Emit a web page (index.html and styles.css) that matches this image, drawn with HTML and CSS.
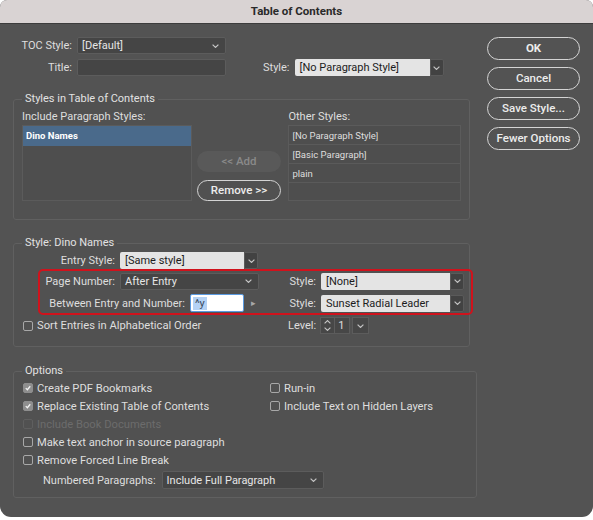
FILE: index.html
```html
<!DOCTYPE html>
<html>
<head>
    <title>Table of Contents</title>
    <link rel="stylesheet" href="styles.css">
</head>
<body>
    <div class="window">
        <div class="titlebar">Table of Contents</div>
        <div class="content">
            <div class="main">
                <div class="top-grid">
                    <span class="lbl right">TOC Style:</span>
                    <div class="dd dark"><span>[Default]</span><svg class="chev" viewBox="0 0 7 4"><path d="M.6.6 3.5 3.4 6.4.6"/></svg></div>
                    <div></div>
                    <span class="lbl right">Title:</span>
                    <div class="field dark"></div>
                    <div class="style-pick">
                        <span class="lbl">Style:</span>
                        <div class="combo w149">
                            <span class="combo-text">[No Paragraph Style]</span>
                            <span class="combo-btn"><svg class="chev" viewBox="0 0 7 4"><path d="M.6.6 3.5 3.4 6.4.6"/></svg></span>
                        </div>
                    </div>
                </div>

                <fieldset class="group g-styles">
                    <legend>Styles in Table of Contents</legend>
                    <div class="styles-cols">
                        <div class="col-include">
                            <div class="col-title">Include Paragraph Styles:</div>
                            <div class="list">
                                <div class="row selected">Dino Names</div>
                            </div>
                        </div>
                        <div class="col-buttons">
                            <div class="btn small disabled">&lt;&lt; Add</div>
                            <div class="btn small">Remove &gt;&gt;</div>
                        </div>
                        <div class="col-other">
                            <div class="col-title">Other Styles:</div>
                            <div class="list">
                                <div class="row line">[No Paragraph Style]</div>
                                <div class="row line">[Basic Paragraph]</div>
                                <div class="row line">plain</div>
                                <div class="row"></div>
                            </div>
                        </div>
                    </div>
                </fieldset>

                <fieldset class="group g-entry">
                    <legend>Style: Dino Names</legend>
                    <div class="entry-row">
                        <span class="lbl right w93">Entry Style:</span>
                        <div class="combo w138">
                            <span class="combo-text">[Same style]</span>
                            <span class="combo-btn"><svg class="chev" viewBox="0 0 7 4"><path d="M.6.6 3.5 3.4 6.4.6"/></svg></span>
                        </div>
                    </div>
                    <div class="highlight">
                        <div class="hl-row">
                            <div class="hl-left">
                                <span class="lbl right w75">Page Number:</span>
                                <div class="dd dark w139"><span>After Entry</span><svg class="chev" viewBox="0 0 7 4"><path d="M.6.6 3.5 3.4 6.4.6"/></svg></div>
                            </div>
                            <div class="hl-right">
                                <span class="lbl">Style:</span>
                                <div class="combo w143">
                                    <span class="combo-text">[None]</span>
                                    <span class="combo-btn"><svg class="chev" viewBox="0 0 7 4"><path d="M.6.6 3.5 3.4 6.4.6"/></svg></span>
                                </div>
                            </div>
                        </div>
                        <div class="hl-row tall">
                            <div class="hl-left">
                                <span class="lbl right w145">Between Entry and Number:</span>
                                <div class="focus-field"><span class="sel-text">^y</span></div>
                                <span class="tri">&#9656;</span>
                            </div>
                            <div class="hl-right">
                                <span class="lbl">Style:</span>
                                <div class="combo w143">
                                    <span class="combo-text">Sunset Radial Leader</span>
                                    <span class="combo-btn"><svg class="chev" viewBox="0 0 7 4"><path d="M.6.6 3.5 3.4 6.4.6"/></svg></span>
                                </div>
                            </div>
                        </div>
                    </div>
                    <div class="sort-row">
                        <label class="check w266"><span class="box"></span>Sort Entries in Alphabetical Order</label>
                        <span class="lbl">Level:</span>
                        <div class="spinner">
                            <span class="spin-arrows">
                                <svg viewBox="0 0 7 4"><path d="M.6 3.4 3.5.6 6.4 3.4"/></svg>
                                <svg viewBox="0 0 7 4"><path d="M.6.6 3.5 3.4 6.4.6"/></svg>
                            </span>
                            <span class="spin-val">1</span>
                            <span class="spin-dd"><svg class="chev" viewBox="0 0 7 4"><path d="M.6.6 3.5 3.4 6.4.6"/></svg></span>
                        </div>
                    </div>
                </fieldset>

                <fieldset class="group g-options">
                    <legend>Options</legend>
                    <div class="opt-grid">
                        <label class="check"><span class="box on"><svg viewBox="0 0 10 10"><path d="M2.2 5.2 4.2 7.2 7.8 2.8"/></svg></span>Create PDF Bookmarks</label>
                        <label class="check"><span class="box"></span>Run-in</label>
                        <label class="check"><span class="box on"><svg viewBox="0 0 10 10"><path d="M2.2 5.2 4.2 7.2 7.8 2.8"/></svg></span>Replace Existing Table of Contents</label>
                        <label class="check"><span class="box"></span>Include Text on Hidden Layers</label>
                        <label class="check off"><span class="box"></span>Include Book Documents</label>
                        <div></div>
                        <label class="check"><span class="box"></span>Make text anchor in source paragraph</label>
                        <div></div>
                        <label class="check"><span class="box"></span>Remove Forced Line Break</label>
                        <div></div>
                    </div>
                    <div class="num-row">
                        <span class="lbl">Numbered Paragraphs:</span>
                        <div class="dd dark w162"><span>Include Full Paragraph</span><svg class="chev" viewBox="0 0 7 4"><path d="M.6.6 3.5 3.4 6.4.6"/></svg></div>
                    </div>
                </fieldset>
            </div>

            <div class="side">
                <div class="btn big strong">OK</div>
                <div class="btn big">Cancel</div>
                <div class="btn big">Save Style...</div>
                <div class="btn big">Fewer Options</div>
            </div>
        </div>
    </div>
</body>
</html>
```

FILE: styles.css
```css
body {
    margin: 0;
    background: #fff;
    font-family: Roboto, "Liberation Sans", sans-serif;
    font-size: 11px;
    color: #dedede;
}
.window {
    width: 593px;
    height: 517px;
    background: #535353;
    border-radius: 7px 7px 11px 11px;
    overflow: hidden;
}
.titlebar {
    height: 23px;
    line-height: 23px;
    background: #d9d3d3;
    border-bottom: 1px solid #3c3c3c;
    color: #2a2a2a;
    font-weight: bold;
    font-size: 11.5px;
    text-align: center;
}
.content {
    display: flex;
    padding: 13px 13px 0 13px;
}
.main {
    width: 464px;
}
.side {
    width: 93px;
    margin-left: 10px;
    display: flex;
    flex-direction: column;
    gap: 7px;
}

/* labels */
.lbl {
    white-space: nowrap;
}
.right {
    text-align: right;
}
.w93 { width: 93px; display: inline-block; }
.w75 { width: 75px; display: inline-block; }
.w145 { width: 145px; display: inline-block; }

/* top fields */
.top-grid {
    display: grid;
    grid-template-columns: 59px 149px auto;
    grid-template-rows: 17px 17px;
    column-gap: 5px;
    row-gap: 5px;
    align-items: center;
}
.style-pick {
    display: flex;
    align-items: center;
    gap: 5px;
    padding-left: 32px;
}

/* dropdowns and fields */
.dd {
    height: 17px;
    box-sizing: border-box;
    display: flex;
    align-items: center;
    justify-content: space-between;
    padding: 0 6px 0 4px;
    border-radius: 2px;
}
.dark {
    background: #454545;
    border: 1px solid #5c5c5c;
    color: #e6e6e6;
}
.field {
    height: 17px;
    box-sizing: border-box;
    border-radius: 2px;
}
.w139 { width: 139px; }
.w162 { width: 162px; height: 18px; }
.chev {
    width: 7px;
    height: 4px;
    fill: none;
    stroke: #c4c4c4;
    stroke-width: 1.2;
}
.combo {
    display: flex;
    height: 17px;
}
.combo-text {
    flex: 1;
    background: #e4e4e4;
    color: #1c1c1c;
    padding-left: 5px;
    line-height: 17px;
    border-radius: 2px 0 0 2px;
}
.combo-btn {
    width: 14px;
    background: #424242;
    border: 1px solid #5a5a5a;
    box-sizing: border-box;
    display: flex;
    align-items: center;
    justify-content: center;
    border-radius: 0 2px 2px 0;
}
.w149 { width: 149px; }
.w138 { width: 138px; }
.w143 { width: 143px; }

/* groups */
.group {
    border: 1px solid #606060;
    border-radius: 3px;
    background: #515151;
    margin: 0;
    padding: 0 8px;
    min-width: 0;
}
.group legend {
    padding: 0 3px;
    line-height: 14px;
    font-size: 11px;
    color: #e2e2e2;
}
.g-styles {
    width: 457px;
    box-sizing: border-box;
    margin-top: 16px;
    padding-top: 4px;
    padding-bottom: 18px;
}
.styles-cols {
    display: flex;
}
.col-title {
    line-height: 14px;
    margin-bottom: 1px;
}
.col-include { width: 170px; }
.col-buttons {
    width: 85px;
    margin-left: 5px;
    display: flex;
    flex-direction: column;
    justify-content: flex-end;
    gap: 8px;
}
.col-other {
    width: 173px;
    margin-left: 7px;
}
.list {
    height: 76px;
    box-sizing: border-box;
    border: 1px solid #5b5b5b;
    background: #4e4e4e;
    font-size: 9.5px;
}
.row {
    height: 19px;
    line-height: 19px;
    padding-left: 3px;
    box-sizing: border-box;
}
.row.line {
    border-bottom: 1px solid #5a5a5a;
}
.row.selected {
    height: 20px;
    background: #4a6a8b;
    color: #fff;
    font-weight: bold;
}

/* buttons */
.btn {
    box-sizing: border-box;
    border: 1.5px solid #d4d4d4;
    border-radius: 12px;
    text-align: center;
    color: #ececec;
}
.btn.small {
    height: 21px;
    line-height: 18px;
    font-size: 11.5px;
    font-weight: 500;
}
.btn.disabled {
    border-color: transparent;
    background: #595959;
    color: #8a8a8a;
}
.btn.big {
    height: 23px;
    line-height: 20px;
    font-size: 11.5px;
    font-weight: 500;
}
.btn.strong {
    font-weight: bold;
}

/* entry style group */
.g-entry {
    width: 457px;
    box-sizing: border-box;
    margin-top: 16px;
    padding-top: 2px;
    padding-bottom: 12px;
}
.entry-row {
    display: flex;
    align-items: center;
    gap: 5px;
    height: 17px;
}
.highlight {
    margin: 0 -12px 0 16px;
    border: 2px solid #d0121c;
    border-radius: 5px;
    padding: 2px 7px 1px 0;
    display: flex;
    flex-direction: column;
    gap: 5px;
}
.hl-row {
    display: flex;
    justify-content: space-between;
    align-items: center;
    height: 16px;
}
.hl-row.tall {
    height: 18px;
}
.hl-left,
.hl-right {
    display: flex;
    align-items: center;
    gap: 5px;
}
.focus-field {
    width: 54px;
    height: 18px;
    box-sizing: border-box;
    background: #fff;
    border: 1.5px solid #5b9ae0;
    border-radius: 2px;
    padding-left: 2px;
    display: flex;
    align-items: center;
}
.sel-text {
    background: #b4d2f5;
    color: #3a4a5e;
    padding: 0 2px;
    line-height: 13px;
}
.tri {
    color: #a8a8a8;
    font-size: 9px;
    margin-left: 2px;
}
.sort-row {
    display: flex;
    align-items: center;
    height: 17px;
    margin-top: 2px;
}
.w266 { width: 266px; }
.spinner {
    display: flex;
    height: 17px;
    margin-left: 4px;
}
.spin-arrows {
    width: 15px;
    box-sizing: border-box;
    border: 1px solid #5c5c5c;
    background: #474747;
    display: flex;
    flex-direction: column;
    align-items: center;
    justify-content: center;
    gap: 3px;
}
.spin-arrows svg {
    width: 7px;
    height: 4px;
    fill: none;
    stroke: #c8c8c8;
    stroke-width: 1.1;
}
.spin-val {
    width: 15px;
    box-sizing: border-box;
    border: 1px solid #5c5c5c;
    border-left: none;
    background: #474747;
    padding-left: 3px;
    line-height: 15px;
}
.spin-dd {
    width: 17px;
    margin-left: 2px;
    box-sizing: border-box;
    border: 1px solid #5c5c5c;
    background: #474747;
    display: flex;
    align-items: center;
    justify-content: center;
}

/* checkboxes */
.check {
    display: flex;
    align-items: center;
    white-space: nowrap;
    font-size: 11.2px;
}
.box {
    width: 10px;
    height: 10px;
    box-sizing: border-box;
    border: 1px solid #a8a8a8;
    border-radius: 2px;
    margin: 0 4px 0 1px;
    display: flex;
}
.box.on {
    background: #8e8e8e;
    border-color: #8e8e8e;
}
.box svg {
    width: 8px;
    height: 8px;
    fill: none;
    stroke: #f2f2f2;
    stroke-width: 1.6;
}
.check.off {
    color: #6c6c6c;
}
.check.off .box {
    border-color: #5f5f5f;
}

/* options group */
.g-options {
    width: 464px;
    box-sizing: border-box;
    margin-top: 17px;
    padding-top: 1px;
    padding-bottom: 8px;
}
.opt-grid {
    display: grid;
    grid-template-columns: 247px 1fr;
    grid-auto-rows: 18px;
}
.num-row {
    display: flex;
    align-items: center;
    gap: 6px;
    margin-top: 2px;
    padding-left: 21px;
    height: 18px;
}
```
